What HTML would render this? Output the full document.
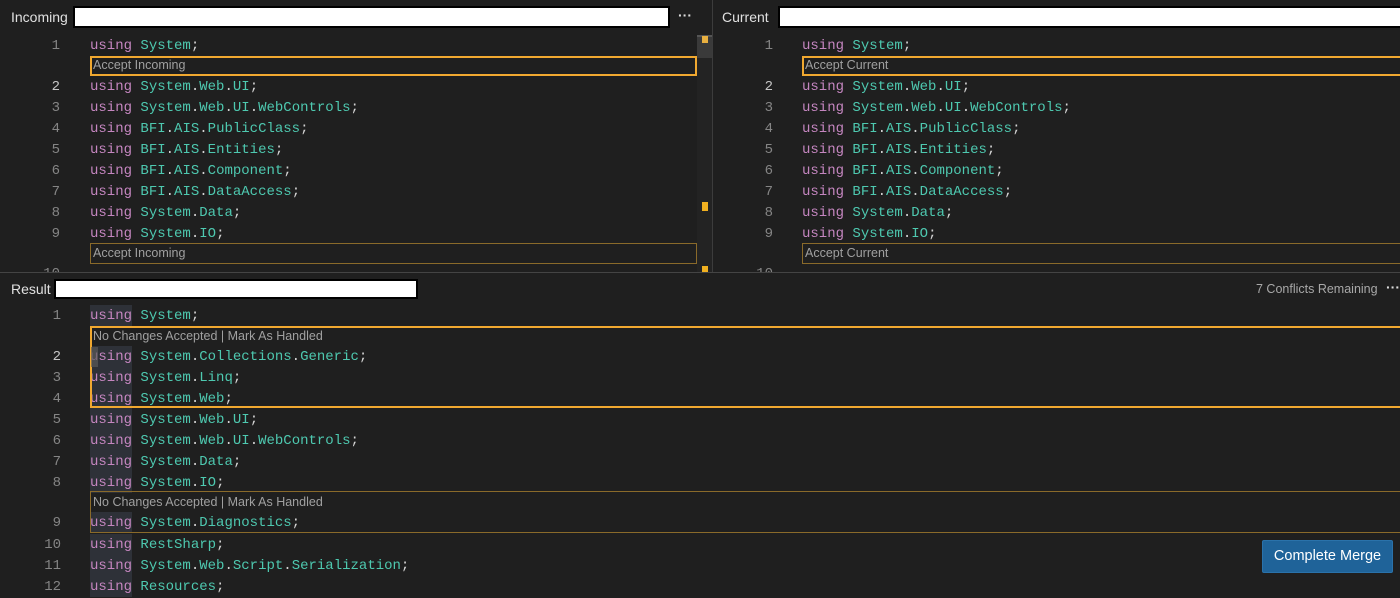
<!DOCTYPE html>
<html><head><meta charset="utf-8"><style>
*{margin:0;padding:0;box-sizing:border-box}
body{width:1400px;height:597px;background:#1f1f1f;position:relative;overflow:hidden;font-family:"Liberation Sans",sans-serif}
.a{position:absolute}
.t{color:#e0e0e0;font-size:14px}
.in{background:#fff;border:2px solid #000;height:22px}
.ln{position:absolute;width:30px;text-align:right;font:14px "Liberation Mono",monospace;color:#858585;line-height:21px}
.ln.act{color:#c6c6c6}
.c{position:absolute;font:14px "Liberation Mono",monospace;color:#d4d4d4;line-height:21px;white-space:pre}
.k{color:#c586c0}.ty{color:#4ec9b0}
.lens{position:absolute;font-size:12.5px;color:#a0a0a0;line-height:18px;padding-left:3px;white-space:nowrap}
.hl{position:absolute;background:#2e3138;width:42px}
</style></head><body>
<div class="a t" style="left:11px;top:9px">Incoming</div>
<div class="a in" style="left:73px;top:6px;width:597px"></div>
<div class="a t" style="left:678px;top:7px;font-weight:bold;color:#ddd">···</div>
<div class="a" style="left:712px;top:0;width:1px;height:272px;background:#3c3c3c"></div>
<div class="a" style="left:697px;top:35px;width:15px;height:237px;background:#232323"></div>
<div class="a" style="left:697px;top:35px;width:15px;height:23px;background:#3a3a3a;border-top:2px solid #555"></div>
<div class="a" style="left:702px;top:36px;width:6px;height:7px;background:#e8b040"></div>
<div class="a" style="left:702px;top:202px;width:6px;height:9px;background:#f0b020"></div>
<div class="a" style="left:702px;top:266px;width:6px;height:6px;background:#f0b020"></div>

<div class="a t" style="left:722px;top:9px">Current</div>
<div class="a in" style="left:778px;top:6px;width:630px"></div>

<div id="tl"></div>
<div class="a" style="left:0;top:272px;width:1400px;height:1px;background:#444"></div>

<div class="a" style="left:90px;top:56px;width:607px;height:20px;border:2px solid #f0a830"></div>
<div class="lens" style="left:90px;top:56px">Accept Incoming</div>
<div class="a" style="left:90px;top:243px;width:607px;height:21px;border:1px solid #8a6a2a"></div>
<div class="lens" style="left:90px;top:244px">Accept Incoming</div>
<div class="a" style="left:802px;top:56px;width:600px;height:20px;border:2px solid #f0a830"></div>
<div class="lens" style="left:802px;top:56px">Accept Current</div>
<div class="a" style="left:802px;top:243px;width:600px;height:21px;border:1px solid #8a6a2a"></div>
<div class="lens" style="left:802px;top:244px">Accept Current</div>

<div class="a t" style="left:11px;top:281px">Result</div>
<div class="a in" style="left:54px;top:279px;width:364px;height:20px"></div>
<div class="a" style="left:1256px;top:282px;font-size:12.5px;color:#a8a8a8">7 Conflicts Remaining</div>
<div class="a t" style="left:1386px;top:279px;font-weight:bold;color:#ddd">···</div>

<div id="rs"></div>
<div class="a" style="left:90px;top:326px;width:1312px;height:82px;border:2px solid #f0a830"></div>
<div class="lens" style="left:90px;top:327px">No Changes Accepted | Mark As Handled</div>
<div class="a" style="left:90px;top:491px;width:1312px;height:42px;border:1px solid #8a6a2a"></div>
<div class="lens" style="left:90px;top:493px">No Changes Accepted | Mark As Handled</div>

<div class="a" style="left:91px;top:347px;width:7px;height:20px;background:#5a5a5a;opacity:.7"></div>
<div class="a" style="left:1262px;top:540px;width:131px;height:33px;background:#1f6399;border:1px solid #2a72aa;border-radius:2px;color:#fff;font-size:14.5px;line-height:31px;text-align:center">Complete Merge</div>
<script>
function line(n,y,x0,lnx,ns,act,hl){
 var h='';
 if(hl)h+='<div class="hl" style="left:'+x0+'px;top:'+(y-10)+'px;height:21px"></div>';
 h+='<div class="ln'+(act?' act':'')+'" style="left:'+lnx+'px;top:'+(y-9)+'px">'+n+'</div>';
 var p=ns.split('.').map(function(s){return '<span class="ty">'+s+'</span>';}).join('.');
 h+='<div class="c" style="left:'+x0+'px;top:'+(y-9)+'px"><span class="k">using</span> '+p+';</div>';
 return h;
}
var tops=['System','System.Web.UI','System.Web.UI.WebControls','BFI.AIS.PublicClass','BFI.AIS.Entities','BFI.AIS.Component','BFI.AIS.DataAccess','System.Data','System.IO'];
var tys=[45,86,107,128,149,170,191,212,233];
var h='';
[[90,30],[802,743]].forEach(function(q){
 tops.forEach(function(s,i){h+=line(i+1,tys[i],q[0],q[1],s,i==1,false);});
 h+='<div class="ln" style="left:'+q[1]+'px;top:264px;height:8px;overflow:hidden">10</div>';
});
document.getElementById('tl').innerHTML=h;
var rs=['System','System.Collections.Generic','System.Linq','System.Web','System.Web.UI','System.Web.UI.WebControls','System.Data','System.IO','System.Diagnostics','RestSharp','System.Web.Script.Serialization','Resources'];
var ry=[315,356,377,398,419,440,461,482,522,544,565,586];
h='';
rs.forEach(function(s,i){h+=line(i+1,ry[i],90,31,s,i==1,true);});
document.getElementById('rs').innerHTML=h;
</script>
</body></html>
